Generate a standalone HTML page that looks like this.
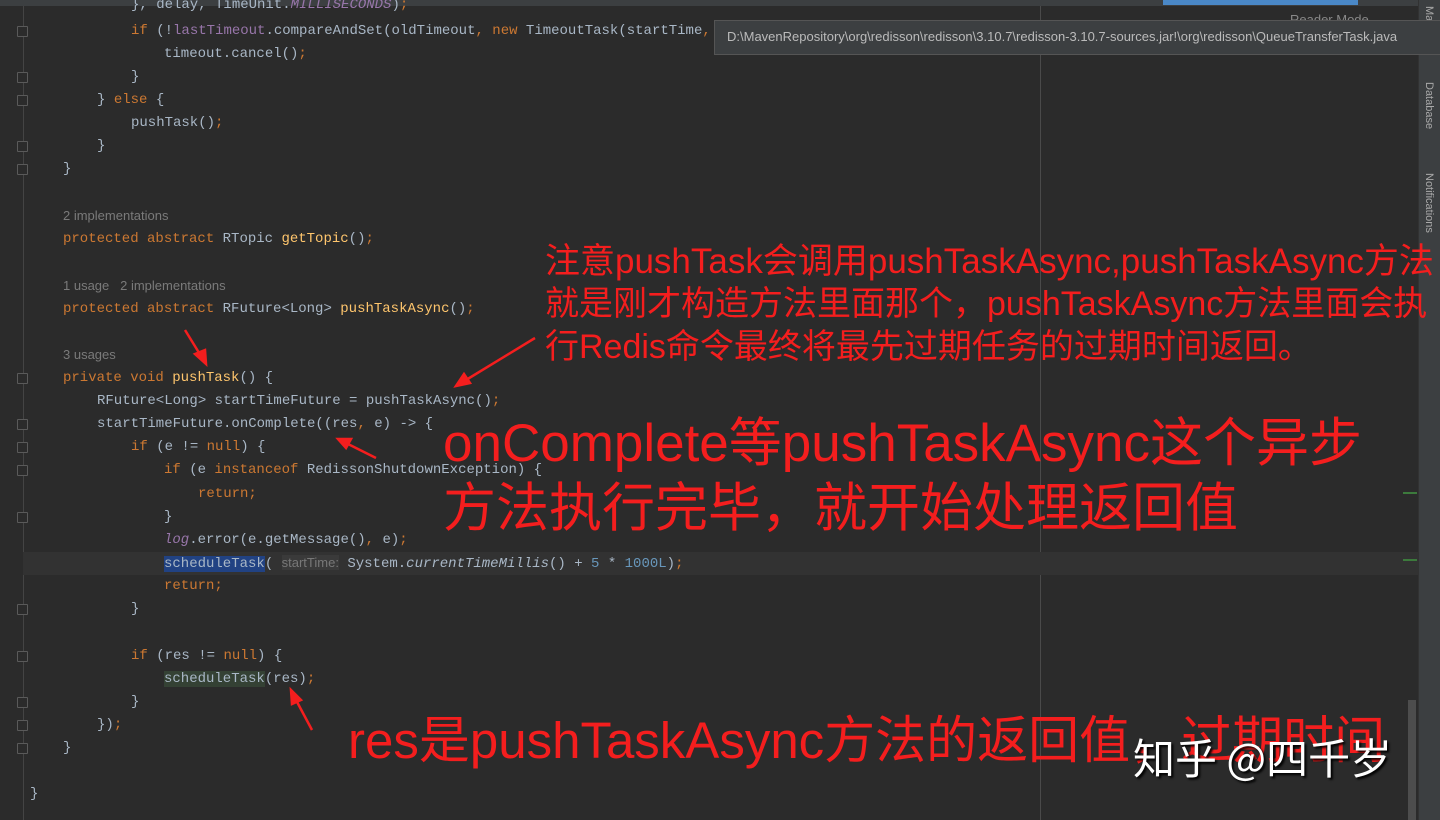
<!DOCTYPE html>
<html><head><meta charset="utf-8"><style>
html,body{margin:0;padding:0;width:1440px;height:820px;overflow:hidden;background:#2b2b2b}
.c{position:absolute;font-family:"Liberation Mono",monospace;font-size:14px;color:#a9b7c6;white-space:pre;line-height:18px;margin-top:-9px}
.h{position:absolute;font-family:"Liberation Sans",sans-serif;font-size:13px;color:#7a7a7a;white-space:pre;line-height:16px;margin-top:-8px}
.k{color:#cc7832}.m{color:#ffc66d}.f{color:#9876aa}.n{color:#6897bb}.i{font-style:italic}
.r{position:absolute;font-family:"Liberation Sans","Noto Sans CJK SC",sans-serif;color:#f41e1e;white-space:nowrap}
.g{position:absolute;left:17px;width:9px;height:9px;border:1px solid #5a5a5a;border-radius:1px;background:#2b2b2b}
</style></head><body>
<div style="position:absolute;left:0;top:0;width:1440px;height:6px;background:#3c3f41"></div>
<div style="position:absolute;left:1163px;top:0;width:195px;height:5px;background:#4a88c7"></div>
<div style="position:absolute;left:23px;top:6px;width:1px;height:814px;background:#444"></div>
<div style="position:absolute;left:1040px;top:6px;width:1px;height:814px;background:#4a4a4a"></div>
<div style="position:absolute;left:1418px;top:0;width:22px;height:820px;background:#3c3f41;border-left:1px solid #323232"></div>
<div style="position:absolute;left:23px;top:552px;width:1395px;height:23px;background:#323232"></div>
<div style="position:absolute;left:1408px;top:700px;width:8px;height:120px;background:#4d4d4d"></div>
<div style="position:absolute;left:1403px;top:492px;width:14px;height:2px;background:#3c7a3c"></div>
<div style="position:absolute;left:1403px;top:559px;width:14px;height:2px;background:#3c7a3c"></div>
<div class="h" style="left:1290px;top:20px;color:#888">Reader Mode</div>
<div style="position:absolute;left:1423px;top:6px;font:11px 'Liberation Sans',sans-serif;color:#aaa;writing-mode:vertical-rl">Ma</div>
<div style="position:absolute;left:1423px;top:82px;font:11px 'Liberation Sans',sans-serif;color:#aaa;writing-mode:vertical-rl">Database</div>
<div style="position:absolute;left:1423px;top:173px;font:11px 'Liberation Sans',sans-serif;color:#aaa;writing-mode:vertical-rl">Notifications</div>

<span class="g" style="top:26px"></span><span class="g" style="top:72px"></span><span class="g" style="top:95px"></span><span class="g" style="top:141px"></span><span class="g" style="top:164px"></span>
<span class="g" style="top:373px"></span><span class="g" style="top:419px"></span><span class="g" style="top:442px"></span><span class="g" style="top:465px"></span><span class="g" style="top:512px"></span><span class="g" style="top:604px"></span><span class="g" style="top:651px"></span><span class="g" style="top:697px"></span><span class="g" style="top:720px"></span><span class="g" style="top:743px"></span>

<div class="c" style="left:131px;top:5px">}, delay, TimeUnit.<span class="f i">MILLISECONDS</span>)<span class="k">;</span></div>
<div class="c" style="left:131px;top:31px"><span class="k">if</span> (!<span class="f">lastTimeout</span>.compareAndSet(oldTimeout<span class="k">, new</span> TimeoutTask(startTime<span class="k">,</span></div>
<div class="c" style="left:164px;top:54px">timeout.cancel()<span class="k">;</span></div>
<div class="c" style="left:131px;top:77px">}</div>
<div class="c" style="left:97px;top:100px">} <span class="k">else</span> {</div>
<div class="c" style="left:131px;top:123px">pushTask()<span class="k">;</span></div>
<div class="c" style="left:97px;top:146px">}</div>
<div class="c" style="left:63px;top:169px">}</div>
<div class="h" style="left:63px;top:216px">2 implementations</div>
<div class="c" style="left:63px;top:239px"><span class="k">protected abstract</span> RTopic <span class="m">getTopic</span>()<span class="k">;</span></div>
<div class="h" style="left:63px;top:286px">1 usage   2 implementations</div>
<div class="c" style="left:63px;top:309px"><span class="k">protected abstract</span> RFuture&lt;Long&gt; <span class="m">pushTaskAsync</span>()<span class="k">;</span></div>
<div class="h" style="left:63px;top:355px">3 usages</div>
<div class="c" style="left:63px;top:378px"><span class="k">private void</span> <span class="m">pushTask</span>() {</div>
<div class="c" style="left:97px;top:401px">RFuture&lt;Long&gt; startTimeFuture = pushTaskAsync()<span class="k">;</span></div>
<div class="c" style="left:97px;top:424px">startTimeFuture.onComplete((res<span class="k">,</span> e) -&gt; {</div>
<div class="c" style="left:131px;top:447px"><span class="k">if</span> (e != <span class="k">null</span>) {</div>
<div class="c" style="left:164px;top:470px"><span class="k">if</span> (e <span class="k">instanceof</span> RedissonShutdownException) {</div>
<div class="c" style="left:198px;top:494px"><span class="k">return;</span></div>
<div class="c" style="left:164px;top:517px">}</div>
<div class="c" style="left:164px;top:540px"><span class="f i">log</span>.error(e.getMessage()<span class="k">,</span> e)<span class="k">;</span></div>
<div class="c" style="left:164px;top:563px"><span style="background:#214283">scheduleTask</span>( <span style="font-family:'Liberation Sans',sans-serif;font-size:13px;color:#787878;background:#3a3a3a">startTime:</span> System.<span class="i">currentTimeMillis</span>() + <span class="n">5</span> * <span class="n">1000L</span>)<span class="k">;</span></div>
<div class="c" style="left:164px;top:586px"><span class="k">return;</span></div>
<div class="c" style="left:131px;top:609px">}</div>
<div class="c" style="left:131px;top:656px"><span class="k">if</span> (res != <span class="k">null</span>) {</div>
<div class="c" style="left:164px;top:679px"><span style="background:#344134">scheduleTask</span>(res)<span class="k">;</span></div>
<div class="c" style="left:131px;top:702px">}</div>
<div class="c" style="left:97px;top:725px">})<span class="k">;</span></div>
<div class="c" style="left:63px;top:748px">}</div>
<div class="c" style="left:30px;top:794px">}</div>

<div style="position:absolute;left:714px;top:20px;width:730px;height:35px;background:#3c3f41;border:1px solid #555;box-sizing:border-box"></div>
<div style="position:absolute;left:727px;top:29px;font:13px 'Liberation Sans',sans-serif;color:#bbb;white-space:nowrap">D:\MavenRepository\org\redisson\redisson\3.10.7\redisson-3.10.7-sources.jar!\org\redisson\QueueTransferTask.java</div>

<div class="r" style="left:545px;top:241px;font-size:35px;line-height:42px">注意pushTask会调用pushTaskAsync,pushTaskAsync方法</div>
<div class="r" style="left:545px;top:283px;font-size:34px;line-height:42px">就是刚才构造方法里面那个，pushTaskAsync方法里面会执</div>
<div class="r" style="left:545px;top:326px;font-size:34px;line-height:42px">行Redis命令最终将最先过期任务的过期时间返回。</div>
<div class="r" style="left:443px;top:412px;font-size:53px;line-height:64px">onComplete等pushTaskAsync这个异步</div>
<div class="r" style="left:443px;top:477px;font-size:53px;line-height:64px">方法执行完毕，就开始处理返回值</div>
<div class="r" style="left:348px;top:710px;font-size:51px;line-height:62px">res是pushTaskAsync方法的返回值，过期时间</div>
<div style="position:absolute;left:1133px;top:732px;font:42px 'Noto Sans CJK SC',sans-serif;color:#fff;white-space:nowrap;line-height:50px;text-shadow:2px 2px 2px #000">知乎 @四千岁</div>

<svg style="position:absolute;left:0;top:0" width="1440" height="820">
<g stroke="#f41e1e" stroke-width="2.5" fill="#f41e1e">
<line x1="185" y1="330" x2="201" y2="356"/><polygon points="206,364 195,354 205,350"/>
<line x1="535" y1="338" x2="466" y2="380"/><polygon points="456,386 464,374 470,383"/>
<line x1="376" y1="458" x2="348" y2="444"/><polygon points="338,439 351,439 346,448"/>
<line x1="312" y1="730" x2="296" y2="700"/><polygon points="291,690 301,700 292,704"/>
</g></svg>
</body></html>
